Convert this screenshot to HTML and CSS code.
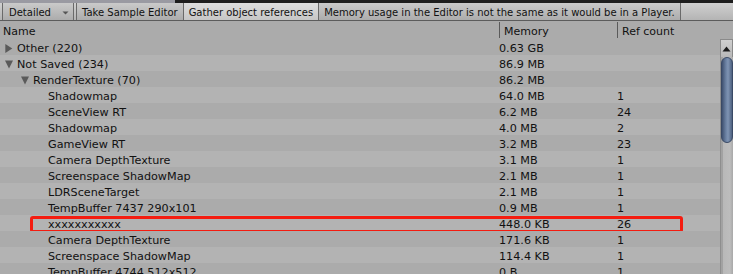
FILE: index.html
```html
<!DOCTYPE html>
<html>
<head>
<meta charset="utf-8">
<link rel="stylesheet" href="styles.css">
</head>
<body>
<div class="window">
  <div class="topstrip"><div class="tabhint"></div></div>
  <div class="toolbar">
    <div class="btn dropdown"><span>Detailed</span><svg class="dd" width="7" height="4" viewBox="0 0 7 4"><path d="M0.5 0.5 L6.5 0.5 L3.5 3.5 Z" fill="#555"/></svg></div>
    <div class="btn">Take Sample Editor</div>
    <div class="btn active">Gather object references</div>
    <div class="btn">Memory usage in the Editor is not the same as it would be in a Player.</div>
  </div>
  <div class="header">
    <div class="c-name">Name</div>
    <div class="c-mem">Memory</div>
    <div class="c-ref">Ref count</div>
  </div>
  <div class="body">
    <div class="rows">
      <div class="row dark"><div class="c-name l0"><svg class="tri" width="8" height="9" viewBox="0 0 8 9"><path d="M0.3 0 L7.3 4.5 L0.3 9 Z" fill="#5a5a5a"/></svg>Other (220)</div><div class="c-mem">0.63 GB</div><div class="c-ref"></div></div>
      <div class="row light"><div class="c-name l0"><svg class="tri" width="8" height="9" viewBox="0 0 8 9"><path d="M0 0.5 L8 0.5 L4 8.5 Z" fill="#5a5a5a"/></svg>Not Saved (234)</div><div class="c-mem">86.9 MB</div><div class="c-ref"></div></div>
      <div class="row dark"><div class="c-name l1"><svg class="tri" width="8" height="9" viewBox="0 0 8 9"><path d="M0 0.5 L8 0.5 L4 8.5 Z" fill="#5a5a5a"/></svg>RenderTexture (70)</div><div class="c-mem">86.2 MB</div><div class="c-ref"></div></div>
      <div class="row light"><div class="c-name l2">Shadowmap</div><div class="c-mem">64.0 MB</div><div class="c-ref">1</div></div>
      <div class="row dark"><div class="c-name l2">SceneView RT</div><div class="c-mem">6.2 MB</div><div class="c-ref">24</div></div>
      <div class="row light"><div class="c-name l2">Shadowmap</div><div class="c-mem">4.0 MB</div><div class="c-ref">2</div></div>
      <div class="row dark"><div class="c-name l2">GameView RT</div><div class="c-mem">3.2 MB</div><div class="c-ref">23</div></div>
      <div class="row light"><div class="c-name l2">Camera DepthTexture</div><div class="c-mem">3.1 MB</div><div class="c-ref">1</div></div>
      <div class="row dark"><div class="c-name l2">Screenspace ShadowMap</div><div class="c-mem">2.1 MB</div><div class="c-ref">1</div></div>
      <div class="row light"><div class="c-name l2">LDRSceneTarget</div><div class="c-mem">2.1 MB</div><div class="c-ref">1</div></div>
      <div class="row dark"><div class="c-name l2">TempBuffer 7437 290x101</div><div class="c-mem">0.9 MB</div><div class="c-ref">1</div></div>
      <div class="row light marked"><div class="c-name l2">xxxxxxxxxxx</div><div class="c-mem">448.0 KB</div><div class="c-ref">26</div><div class="redbox"></div></div>
      <div class="row dark"><div class="c-name l2">Camera DepthTexture</div><div class="c-mem">171.6 KB</div><div class="c-ref">1</div></div>
      <div class="row light"><div class="c-name l2">Screenspace ShadowMap</div><div class="c-mem">114.4 KB</div><div class="c-ref">1</div></div>
      <div class="row dark"><div class="c-name l2">TempBuffer 4744 512x512</div><div class="c-mem">0 B</div><div class="c-ref">1</div></div>
    </div>
    <div class="scrollbar">
      <div class="sb-up"><svg width="9" height="6" viewBox="0 0 9 6"><path d="M0.5 5.5 L4.5 0.5 L8.5 5.5 Z" fill="#1a1a1a"/></svg></div>
      <div class="sb-thumb"></div>
      <div class="sb-track"></div>
    </div>
  </div>
</div>
</body>
</html>
```
FILE: styles.css
```css
html, body {
  margin: 0;
  padding: 0;
}
body {
  width: 733px;
  height: 274px;
  overflow: hidden;
  background: #ababab;
  font-family: "DejaVu Sans", Verdana, sans-serif;
  color: #111;
}
.window {
  width: 733px;
  height: 274px;
  display: flex;
  flex-direction: column;
}
.topstrip {
  height: 3px;
  background: #1e1e1e;
  flex: none;
}
.tabhint {
  width: 175px;
  height: 3px;
  background: #9a9aa2;
}
.toolbar {
  flex: none;
  height: 17px;
  display: flex;
  align-items: stretch;
  background: linear-gradient(#d0d0d0, #b4b4b4);
  border-bottom: 1px solid #5c5c5c;
  padding-left: 2px;
  font-size: 10px;
}
.btn {
  display: flex;
  align-items: center;
  padding: 2px 5px 0;
  border-left: 1px solid #6a6a6a;
  white-space: nowrap;
  background: linear-gradient(#cacaca, #acacac);
}
.btn:last-child {
  border-right: 1px solid #6a6a6a;
}
.btn.dropdown {
  width: 60px;
  justify-content: space-between;
  padding: 2px 4px 0 6px;
  margin-right: 2px;
  border-right: 1px solid #6a6a6a;
}
.dd {
  display: block;
}
.btn.active {
  background: linear-gradient(#dedede, #c6c6c6);
}
.header {
  flex: none;
  height: 18px;
  display: flex;
  font-size: 11px;
  align-items: stretch;
}
.header > div {
  display: flex;
  align-items: center;
  box-sizing: border-box;
  padding-top: 3px;
}
.header .c-name {
  padding-left: 3px;
}
.header .c-mem, .header .c-ref {
  border-left: 1px solid #5a5a5a;
  margin: 1px 0 1px;
  padding-left: 4px;
}
.c-name {
  width: 499px;
  box-sizing: border-box;
}
.c-mem {
  width: 118px;
  box-sizing: border-box;
}
.c-ref {
  flex: 1;
}
.body {
  flex: 1;
  display: flex;
  min-height: 0;
}
.rows {
  flex: 1;
  font-size: 11.2px;
}
.row {
  position: relative;
  height: 16px;
  box-sizing: border-box;
  padding-top: 3px;
  line-height: 13px;
  display: flex;
  white-space: nowrap;
}
.row.dark { background: #ababab; }
.row.light { background: #b3b3b3; }
.row .c-name {
  display: flex;
  align-items: center;
}
.l0 { padding-left: 5px; }
.l1 { padding-left: 21px; }
.l2 { padding-left: 48px; }
.tri {
  display: block;
  margin-right: 4px;
  flex: none;
}
.redbox {
  position: absolute;
  left: 30px;
  top: 1px;
  width: 653px;
  height: 17px;
  box-sizing: border-box;
  border: 3px solid #f41c10;
  border-radius: 3px;
}
.scrollbar {
  width: 13px;
  flex: none;
  display: flex;
  flex-direction: column;
  background: linear-gradient(90deg, #8e8e8e 0, #8e8e8e 1px, #a2a2a2 1px, #a2a2a2 3px, #b8b8b8 3px, #bdbdbd 10px, #a8a8a8 13px);
}
.sb-up {
  height: 18px;
  box-sizing: border-box;
  border: 1px solid #8a8a8a;
  border-bottom: none;
  background: linear-gradient(#cfcfcf, #b8b8b8);
  display: flex;
  justify-content: center;
  padding-top: 6px;
}
.sb-up svg { display: block; }
.sb-thumb {
  height: 86px;
  flex: none;
  margin: 0 0 0 1px;
  border-radius: 6px;
  background: linear-gradient(90deg, #3f5170, #6c82a3 40%, #7f94b3 60%, #4e6180);
  border: 1px solid #3a4a66;
  box-sizing: border-box;
}
.sb-track {
  flex: 1;
}
```
